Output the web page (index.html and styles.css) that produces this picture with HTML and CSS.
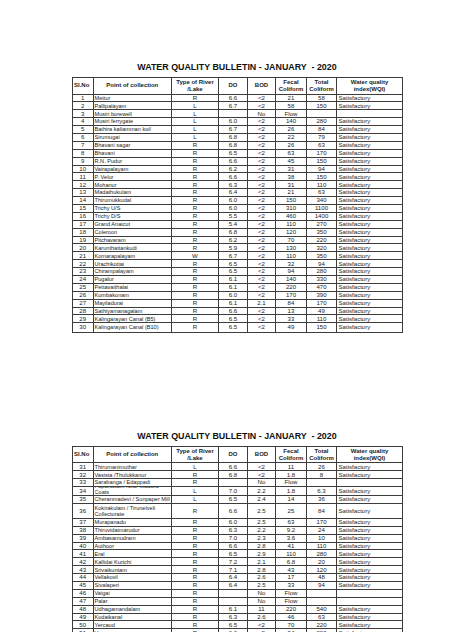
FILE: index.html
```html
<!DOCTYPE html>
<html lang="en">
<head>
<meta charset="utf-8">
<title>Water Quality Bulletin - January 2020</title>
<link rel="stylesheet" href="styles.css">
</head>
<body>
<div class="page">
  <section class="sheet">
    <h1 class="title">WATER QUALITY BULLETIN - JANUARY  - 2020</h1>
    <table class="bulletin">
      <colgroup>
        <col class="w-sl"><col class="w-pt"><col class="w-ty"><col class="w-do"><col class="w-bod"><col class="w-fc"><col class="w-tc"><col class="w-wqi">
      </colgroup>
      <thead>
        <tr><th class="hl">Sl.No</th><th>Point of collection</th><th>Type of River /Lake</th><th>DO</th><th>BOD</th><th>Fecal Coliform</th><th>Total Coliform</th><th>Water quality index(WQI)</th></tr>
      </thead>
      <tbody>
        <tr><td>1</td><td class="l n">Mettur</td><td>R</td><td>6.6</td><td>&lt;2</td><td>21</td><td>58</td><td class="l">Satisfactory</td></tr>
        <tr><td>2</td><td class="l n">Pallipalayam</td><td>L</td><td>6.7</td><td>&lt;2</td><td>58</td><td>150</td><td class="l">Satisfactory</td></tr>
        <tr><td>3</td><td class="l n">Musiri borewell</td><td>L</td><td></td><td>No</td><td>Flow</td><td></td><td class="l"></td></tr>
        <tr><td>4</td><td class="l n">Musiri ferrygate</td><td>L</td><td>6.0</td><td>&lt;2</td><td>140</td><td>280</td><td class="l">Satisfactory</td></tr>
        <tr><td>5</td><td class="l n">Bathira kaliamman koil</td><td>L</td><td>6.7</td><td>&lt;2</td><td>26</td><td>84</td><td class="l">Satisfactory</td></tr>
        <tr><td>6</td><td class="l n">Sirumugai</td><td>L</td><td>6.8</td><td>&lt;2</td><td>22</td><td>79</td><td class="l">Satisfactory</td></tr>
        <tr><td>7</td><td class="l n">Bhavani sagar</td><td>R</td><td>6.8</td><td>&lt;2</td><td>26</td><td>63</td><td class="l">Satisfactory</td></tr>
        <tr><td>8</td><td class="l n">Bhavani</td><td>R</td><td>6.5</td><td>&lt;2</td><td>63</td><td>170</td><td class="l">Satisfactory</td></tr>
        <tr><td>9</td><td class="l n">R.N. Pudur</td><td>R</td><td>6.6</td><td>&lt;2</td><td>45</td><td>150</td><td class="l">Satisfactory</td></tr>
        <tr><td>10</td><td class="l n">Vairapalayam</td><td>R</td><td>6.2</td><td>&lt;2</td><td>31</td><td>94</td><td class="l">Satisfactory</td></tr>
        <tr><td>11</td><td class="l n">P. Velur</td><td>R</td><td>6.6</td><td>&lt;2</td><td>38</td><td>150</td><td class="l">Satisfactory</td></tr>
        <tr><td>12</td><td class="l n">Mohanur</td><td>R</td><td>6.3</td><td>&lt;2</td><td>31</td><td>110</td><td class="l">Satisfactory</td></tr>
        <tr><td>13</td><td class="l n">Madathukulam</td><td>R</td><td>6.4</td><td>&lt;2</td><td>21</td><td>63</td><td class="l">Satisfactory</td></tr>
        <tr><td>14</td><td class="l n">Thirumukkudal</td><td>R</td><td>6.0</td><td>&lt;2</td><td>150</td><td>340</td><td class="l">Satisfactory</td></tr>
        <tr><td>15</td><td class="l n">Trichy U/S</td><td>R</td><td>6.0</td><td>&lt;2</td><td>310</td><td>1100</td><td class="l">Satisfactory</td></tr>
        <tr><td>16</td><td class="l n">Trichy D/S</td><td>R</td><td>5.5</td><td>&lt;2</td><td>460</td><td>1400</td><td class="l">Satisfactory</td></tr>
        <tr><td>17</td><td class="l n">Grand Anaicut</td><td>R</td><td>5.4</td><td>&lt;2</td><td>110</td><td>270</td><td class="l">Satisfactory</td></tr>
        <tr><td>18</td><td class="l n">Coleroon</td><td>R</td><td>6.8</td><td>&lt;2</td><td>120</td><td>350</td><td class="l">Satisfactory</td></tr>
        <tr><td>19</td><td class="l n">Pitchavaram</td><td>R</td><td>6.2</td><td>&lt;2</td><td>70</td><td>220</td><td class="l">Satisfactory</td></tr>
        <tr><td>20</td><td class="l n">Karunthattankudi</td><td>R</td><td>5.9</td><td>&lt;2</td><td>130</td><td>320</td><td class="l">Satisfactory</td></tr>
        <tr><td>21</td><td class="l n">Komarapalayam</td><td>W</td><td>6.7</td><td>&lt;2</td><td>110</td><td>350</td><td class="l">Satisfactory</td></tr>
        <tr><td>22</td><td class="l n">Urachikottai</td><td>R</td><td>6.5</td><td>&lt;2</td><td>32</td><td>94</td><td class="l">Satisfactory</td></tr>
        <tr><td>23</td><td class="l n">Chirampalayam</td><td>R</td><td>6.5</td><td>&lt;2</td><td>94</td><td>280</td><td class="l">Satisfactory</td></tr>
        <tr><td>24</td><td class="l n">Pugalur</td><td>R</td><td>6.1</td><td>&lt;2</td><td>140</td><td>330</td><td class="l">Satisfactory</td></tr>
        <tr><td>25</td><td class="l n">Pettavaithalai</td><td>R</td><td>6.1</td><td>&lt;2</td><td>220</td><td>470</td><td class="l">Satisfactory</td></tr>
        <tr><td>26</td><td class="l n">Kumbakonam</td><td>R</td><td>6.0</td><td>&lt;2</td><td>170</td><td>390</td><td class="l">Satisfactory</td></tr>
        <tr><td>27</td><td class="l n">Mayiladurai</td><td>R</td><td>6.1</td><td>2.1</td><td>84</td><td>170</td><td class="l">Satisfactory</td></tr>
        <tr><td>28</td><td class="l n">Sathiyamanagalam</td><td>R</td><td>6.6</td><td>&lt;2</td><td>13</td><td>49</td><td class="l">Satisfactory</td></tr>
        <tr><td>29</td><td class="l n">Kalingarayan Canal (B5)</td><td>R</td><td>6.5</td><td>&lt;2</td><td>33</td><td>110</td><td class="l">Satisfactory</td></tr>
        <tr class="tall"><td>30</td><td class="l n">Kalingarayan Canal (B10)</td><td>R</td><td>6.5</td><td>&lt;2</td><td>49</td><td>150</td><td class="l">Satisfactory</td></tr>
      </tbody>
    </table>
  </section>

  <section class="sheet">
    <h1 class="title">WATER QUALITY BULLETIN - JANUARY  - 2020</h1>
    <table class="bulletin">
      <colgroup>
        <col class="w-sl"><col class="w-pt"><col class="w-ty"><col class="w-do"><col class="w-bod"><col class="w-fc"><col class="w-tc"><col class="w-wqi">
      </colgroup>
      <thead>
        <tr><th class="hl">Sl.No</th><th>Point of collection</th><th>Type of River /Lake</th><th>DO</th><th>BOD</th><th>Fecal Coliform</th><th>Total Coliform</th><th>Water quality index(WQI)</th></tr>
      </thead>
      <tbody>
        <tr><td>31</td><td class="l n">Thirumanimuthar</td><td>L</td><td>6.6</td><td>&lt;2</td><td>11</td><td>26</td><td class="l">Satisfactory</td></tr>
        <tr><td>32</td><td class="l n">Vasista /Thulukkanur</td><td>R</td><td>6.8</td><td>&lt;2</td><td>1.8</td><td>8</td><td class="l">Satisfactory</td></tr>
        <tr><td>33</td><td class="l n">Sarabanga / Edappadi</td><td>R</td><td></td><td>No</td><td>Flow</td><td></td><td class="l"></td></tr>
        <tr class="clip"><td>34</td><td class="l n"><div class="clipbox">Papanasam Near Madura Coats</div></td><td>L</td><td>7.0</td><td>2.2</td><td>1.8</td><td>6.3</td><td class="l">Satisfactory</td></tr>
        <tr><td>35</td><td class="l n">Cheranmadevi / Sunpaper Mill</td><td>L</td><td>6.5</td><td>2.4</td><td>14</td><td>36</td><td class="l">Satisfactory</td></tr>
        <tr class="double"><td>36</td><td class="l n wrap">Kokirakulam / Tirunelveli Collectorate</td><td>R</td><td>6.6</td><td>2.5</td><td>25</td><td>84</td><td class="l">Satisfactory</td></tr>
        <tr><td>37</td><td class="l n">Murapanadu</td><td>R</td><td>6.0</td><td>2.5</td><td>63</td><td>170</td><td class="l">Satisfactory</td></tr>
        <tr><td>38</td><td class="l n">Thiruvidaimarudur</td><td>R</td><td>6.3</td><td>2.2</td><td>9.2</td><td>24</td><td class="l">Satisfactory</td></tr>
        <tr><td>39</td><td class="l n">Ambasamudram</td><td>R</td><td>7.0</td><td>2.3</td><td>3.6</td><td>10</td><td class="l">Satisfactory</td></tr>
        <tr><td>40</td><td class="l n">Authoor</td><td>R</td><td>6.6</td><td>2.8</td><td>41</td><td>110</td><td class="l">Satisfactory</td></tr>
        <tr><td>41</td><td class="l n">Eral</td><td>R</td><td>6.5</td><td>2.9</td><td>110</td><td>280</td><td class="l">Satisfactory</td></tr>
        <tr><td>42</td><td class="l n">Kallidai Kurichi</td><td>R</td><td>7.2</td><td>2.1</td><td>6.8</td><td>20</td><td class="l">Satisfactory</td></tr>
        <tr><td>43</td><td class="l n">Srivaikuntam</td><td>R</td><td>7.1</td><td>2.8</td><td>43</td><td>120</td><td class="l">Satisfactory</td></tr>
        <tr><td>44</td><td class="l n">Vellakovil</td><td>R</td><td>6.4</td><td>2.6</td><td>17</td><td>48</td><td class="l">Satisfactory</td></tr>
        <tr><td>45</td><td class="l n">Sivalaperi</td><td>R</td><td>6.4</td><td>2.5</td><td>33</td><td>94</td><td class="l">Satisfactory</td></tr>
        <tr><td>46</td><td class="l n">Vaigai</td><td>R</td><td></td><td>No</td><td>Flow</td><td></td><td class="l"></td></tr>
        <tr><td>47</td><td class="l n">Palar</td><td>R</td><td></td><td>No</td><td>Flow</td><td></td><td class="l"></td></tr>
        <tr><td>48</td><td class="l n">Udhagamandalam</td><td>R</td><td>6.1</td><td>11</td><td>220</td><td>540</td><td class="l">Satisfactory</td></tr>
        <tr><td>49</td><td class="l n">Kodaikanal</td><td>R</td><td>6.3</td><td>2.6</td><td>46</td><td>63</td><td class="l">Satisfactory</td></tr>
        <tr><td>50</td><td class="l n">Yercaud</td><td>R</td><td>6.5</td><td>&lt;2</td><td>70</td><td>220</td><td class="l">Satisfactory</td></tr>
        <tr><td>51</td><td class="l n">Veeranam</td><td>R</td><td>6.6</td><td>&lt;2</td><td>94</td><td>280</td><td class="l">Satisfactory</td></tr>
      </tbody>
    </table>
  </section>
</div>
</body>
</html>
```

FILE: styles.css
```css
html, body {
  margin: 0;
  padding: 0;
  background: #ffffff;
  overflow: hidden;
}

body {
  font-family: "Liberation Sans", Arial, sans-serif;
  color: #1c1c1c;
}

.page {
  padding: 62px 72px 0;
}

.sheet + .sheet {
  margin-top: 98px;
}

.title {
  width: 330px;
  margin: 0 0 5px;
  text-align: center;
  font-size: 8.9px;
  line-height: 10px;
  font-weight: bold;
  white-space: pre;
  color: #111;
}

.bulletin {
  width: 330px;
  border-collapse: collapse;
  table-layout: fixed;
  font-size: 6.1px;
}

.w-sl { width: 20.5px; }
.w-pt { width: 78.5px; }
.w-ty { width: 47px; }
.w-do { width: 29px; }
.w-bod { width: 28px; }
.w-fc { width: 31px; }
.w-tc { width: 30px; }
.w-wqi { width: 66px; }

.bulletin th,
.bulletin td {
  border: 1px solid #3c3c3c;
  padding: 0;
  vertical-align: middle;
  overflow: hidden;
}

.bulletin thead tr {
  height: 16.5px;
}

.bulletin th {
  font-size: 6px;
  line-height: 6.6px;
  font-weight: bold;
  text-align: center;
  color: #222;
}

.bulletin th.hl {
  text-align: left;
  padding-left: 1px;
}

.bulletin tbody tr {
  height: 7.9px;
}

.bulletin td {
  line-height: 6.3px;
  text-align: center;
  white-space: nowrap;
}

.bulletin td.l {
  text-align: left;
  padding-left: 1.5px;
}

.bulletin td.n {
  font-size: 5.6px;
  padding-left: 1px;
}

.bulletin td.wrap {
  white-space: normal;
}

.bulletin tr.tall {
  height: 9.5px;
}

.bulletin tr.clip {
  height: 9px;
}

.bulletin tr.double {
  height: 15px;
}

.clipbox {
  height: 8px;
  display: flex;
  flex-direction: column;
  justify-content: flex-end;
  overflow: hidden;
  white-space: normal;
  line-height: 6px;
}
```
